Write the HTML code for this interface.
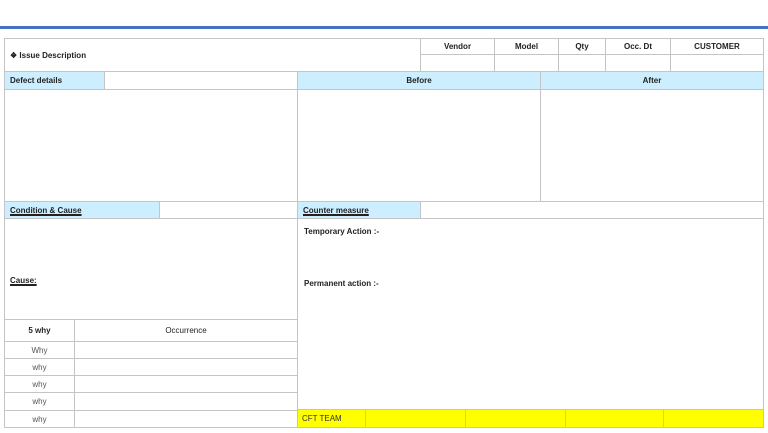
<!DOCTYPE html><html><head><style>
body{margin:0;width:768px;height:433px;background:#fff;position:relative;overflow:hidden;font-family:"Liberation Sans",sans-serif;font-size:8px;color:#222}
.b{position:absolute;border:1px solid #c4c4c4;box-sizing:border-box;display:flex;align-items:center;justify-content:center;font-weight:bold}
.l{justify-content:flex-start;padding-left:5px}
.c{background:#cceeff}
.y{background:#ffff00;font-weight:normal;color:#333}
.n{font-weight:normal;color:#555}
u{text-decoration:underline;text-decoration-thickness:1.5px}
.t{position:absolute;font-weight:bold;font-size:8px}
</style></head><body>
<div style="position:absolute;left:0;top:26px;width:768px;height:3px;background:#4472c4"></div>
<div class="b l" style="left:4px;top:38px;width:417px;height:34px">❖&nbsp;Issue Description</div>
<div class="b" style="left:420px;top:38px;width:75px;height:17px">Vendor</div>
<div class="b" style="left:494px;top:38px;width:65px;height:17px">Model</div>
<div class="b" style="left:558px;top:38px;width:48px;height:17px">Qty</div>
<div class="b" style="left:605px;top:38px;width:66px;height:17px">Occ. Dt</div>
<div class="b" style="left:670px;top:38px;width:94px;height:17px">CUSTOMER</div>
<div class="b" style="left:420px;top:54px;width:75px;height:18px"></div>
<div class="b" style="left:494px;top:54px;width:65px;height:18px"></div>
<div class="b" style="left:558px;top:54px;width:48px;height:18px"></div>
<div class="b" style="left:605px;top:54px;width:66px;height:18px"></div>
<div class="b" style="left:670px;top:54px;width:94px;height:18px"></div>
<div class="b l c" style="left:4px;top:71px;width:101px;height:19px">Defect details</div>
<div class="b" style="left:104px;top:71px;width:194px;height:19px"></div>
<div class="b c" style="left:297px;top:71px;width:244px;height:19px">Before</div>
<div class="b c" style="left:540px;top:71px;width:224px;height:19px">After</div>
<div class="b" style="left:4px;top:89px;width:294px;height:113px"></div>
<div class="b" style="left:297px;top:89px;width:244px;height:113px"></div>
<div class="b" style="left:540px;top:89px;width:224px;height:113px"></div>
<div class="b l c" style="left:4px;top:201px;width:156px;height:18px"><u>Condition &amp; Cause</u></div>
<div class="b" style="left:159px;top:201px;width:139px;height:18px"></div>
<div class="b l c" style="left:297px;top:201px;width:124px;height:18px"><u>Counter measure</u></div>
<div class="b" style="left:420px;top:201px;width:344px;height:18px"></div>
<div class="b" style="left:4px;top:218px;width:294px;height:102px"></div>
<div class="t" style="left:10px;top:276px"><u>Cause:</u></div>
<div class="b" style="left:297px;top:218px;width:467px;height:192px"></div>
<div class="t" style="left:304px;top:227px">Temporary Action :-</div>
<div class="t" style="left:304px;top:279px">Permanent action :-</div>
<div class="b" style="left:4px;top:319px;width:71px;height:23px">5 why</div>
<div class="b n" style="left:74px;top:319px;width:224px;height:23px;color:#222">Occurrence</div>
<div class="b n" style="left:4px;top:341px;width:71px;height:18px">Why</div><div class="b" style="left:74px;top:341px;width:224px;height:18px"></div>
<div class="b n" style="left:4px;top:358px;width:71px;height:18px">why</div><div class="b" style="left:74px;top:358px;width:224px;height:18px"></div>
<div class="b n" style="left:4px;top:375px;width:71px;height:18px">why</div><div class="b" style="left:74px;top:375px;width:224px;height:18px"></div>
<div class="b n" style="left:4px;top:392px;width:71px;height:19px">why</div><div class="b" style="left:74px;top:392px;width:224px;height:19px"></div>
<div class="b n" style="left:4px;top:410px;width:71px;height:18px">why</div><div class="b" style="left:74px;top:410px;width:224px;height:18px"></div>
<div class="b y l" style="left:297px;top:409px;width:69px;height:19px;padding-left:4px">CFT TEAM</div>
<div class="b y" style="left:365px;top:409px;width:101px;height:19px"></div>
<div class="b y" style="left:465px;top:409px;width:101px;height:19px"></div>
<div class="b y" style="left:565px;top:409px;width:99px;height:19px"></div>
<div class="b y" style="left:663px;top:409px;width:101px;height:19px"></div>
</body></html>
